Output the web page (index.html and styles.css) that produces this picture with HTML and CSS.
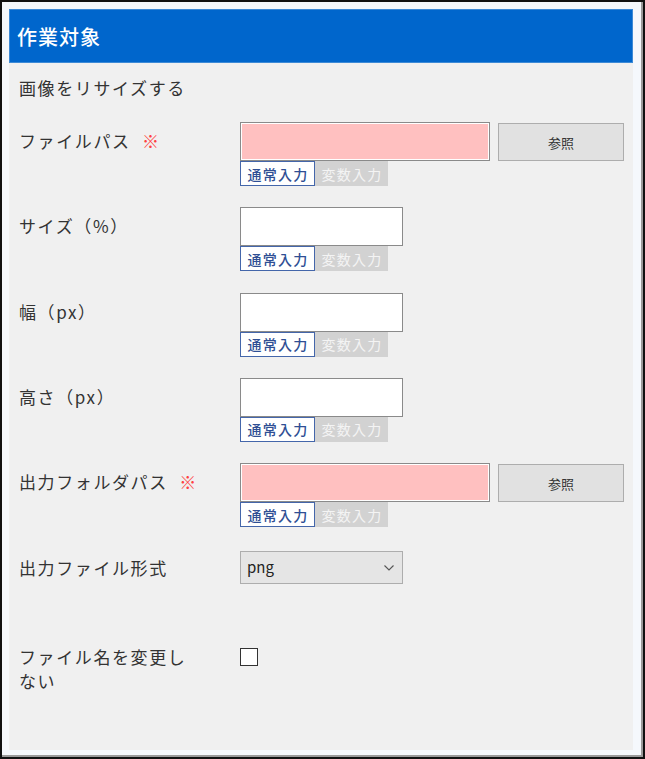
FILE: index.html
```html
<!DOCTYPE html>
<html lang="ja">
<head>
<meta charset="utf-8">
<title>作業対象</title>
<link rel="stylesheet" href="styles.css">
</head>
<body>
<div class="frame">
  <div class="panel">
    <div class="header">作業対象</div>
    <div class="desc">画像をリサイズする</div>
    <div class="form">
      <div class="row">
        <div class="label">ファイルパス <span class="req">※</span></div>
        <div class="field">
          <div class="line">
            <input class="text wide required" type="text">
            <button class="browse" type="button">参照</button>
          </div>
          <div class="tabs"><span class="tab active">通常入力</span><span class="tab">変数入力</span></div>
        </div>
      </div>
      <div class="row">
        <div class="label">サイズ（%）</div>
        <div class="field">
          <div class="line"><input class="text short" type="text"></div>
          <div class="tabs"><span class="tab active">通常入力</span><span class="tab">変数入力</span></div>
        </div>
      </div>
      <div class="row">
        <div class="label">幅（px）</div>
        <div class="field">
          <div class="line"><input class="text short" type="text"></div>
          <div class="tabs"><span class="tab active">通常入力</span><span class="tab">変数入力</span></div>
        </div>
      </div>
      <div class="row">
        <div class="label">高さ（px）</div>
        <div class="field">
          <div class="line"><input class="text short" type="text"></div>
          <div class="tabs"><span class="tab active">通常入力</span><span class="tab">変数入力</span></div>
        </div>
      </div>
      <div class="row">
        <div class="label">出力フォルダパス <span class="req">※</span></div>
        <div class="field">
          <div class="line">
            <input class="text wide required" type="text">
            <button class="browse" type="button">参照</button>
          </div>
          <div class="tabs"><span class="tab active">通常入力</span><span class="tab">変数入力</span></div>
        </div>
      </div>
      <div class="row row-select">
        <div class="label">出力ファイル形式</div>
        <div class="field">
          <div class="select">
            <span class="select-value">png</span>
            <svg class="chevron" width="10" height="6" viewBox="0 0 10 6"><path d="M0.5 0.5 L5 5 L9.5 0.5" fill="none" stroke="#555" stroke-width="1.1"/></svg>
          </div>
        </div>
      </div>
      <div class="row row-check">
        <div class="label label-wrap">ファイル名を変更し<br>ない</div>
        <div class="field">
          <span class="checkbox"></span>
        </div>
      </div>
    </div>
  </div>
</div>
</body>
</html>
```

FILE: styles.css
```css
* {
  box-sizing: border-box;
}

html, body {
  margin: 0;
  padding: 0;
  background: #f5f8fc;
}

body {
  font-family: "Noto Sans CJK JP", "Noto Sans", sans-serif;
  color: #333;
}

.frame {
  width: 645px;
  height: 759px;
  border: 2px solid #111;
  box-shadow: inset -2px -2px 0 #9a9a9a;
  background: #f5f8fc;
  padding: 7px 0 0 7px;
}

.panel {
  width: 624px;
  height: 741px;
  background: #f0f0f0;
}

.header {
  height: 54px;
  background: #0066cc;
  border: 1px solid #3d8ad6;
  color: #fff;
  font-size: 20px;
  font-weight: 500;
  letter-spacing: 1px;
  display: flex;
  align-items: center;
  padding-left: 7px;
}

.desc {
  margin-top: 12px;
  padding-left: 10px;
  font-size: 17px;
  line-height: 25px;
  letter-spacing: 1.6px;
}

.form {
  margin-top: 22px;
  display: flex;
  flex-direction: column;
}

.row {
  display: flex;
  height: 65px;
  margin-bottom: 20.25px;
}

.row:nth-child(5) {
  margin-bottom: 23px;
}

.row-select {
  height: 33px;
  margin-bottom: 53.5px;
}

.row-check {
  height: 60px;
  margin-bottom: 0;
}

.label {
  width: 231px;
  padding-left: 10px;
  padding-top: 6px;
  font-size: 17px;
  line-height: 25px;
  letter-spacing: 1.6px;
  white-space: nowrap;
}

.row-select .label {
  padding-top: 4px;
}

.row-check .label {
  line-height: 24px;
  padding-top: 7px;
}

.req {
  color: #ff4040;
  margin-left: 6px;
}

.field {
  display: flex;
  flex-direction: column;
}

.line {
  display: flex;
  align-items: flex-start;
  gap: 8px;
}

.text {
  height: 39px;
  border: 1px solid #8a8a8a;
  box-shadow: inset 0 0 0 1px #ffffff;
  background: #fff;
  margin: 0;
  padding: 0 4px;
  font: inherit;
}

.text.required {
  background: #ffc0c0;
}

.wide {
  width: 250px;
}

.short {
  width: 163px;
}

.browse {
  margin: 1px 0 0;
  width: 126px;
  height: 38px;
  background: #e1e1e1;
  border: 1px solid #adadad;
  font-family: "Noto Sans CJK JP", sans-serif;
  font-size: 13px;
  color: #333;
  padding: 0;
}

.tabs {
  display: flex;
  height: 25px;
}

.tab {
  display: flex;
  align-items: center;
  justify-content: center;
  font-size: 14px;
  letter-spacing: 1.3px;
  height: 25px;
  width: 73px;
  background: #d2d2d2;
  color: #f4f4f4;
  padding-left: 1px;
}

.tab.active {
  width: 75px;
  background: #fff;
  color: #2f4f94;
  font-weight: 500;
  border: 1.5px solid #4466aa;
}

.select {
  width: 163px;
  height: 33px;
  background: #e5e5e5;
  border: 1px solid #adadad;
  display: flex;
  align-items: center;
  justify-content: space-between;
  padding: 0 8px 0 6px;
  font-size: 15px;
  color: #222;
}

.select-value {
  line-height: 1;
  padding-bottom: 2px;
}

.chevron {
  display: block;
}

.checkbox {
  display: block;
  margin-top: 10.5px;
  width: 18px;
  height: 18px;
  background: #fff;
  border: 1.5px solid #333;
}
```
